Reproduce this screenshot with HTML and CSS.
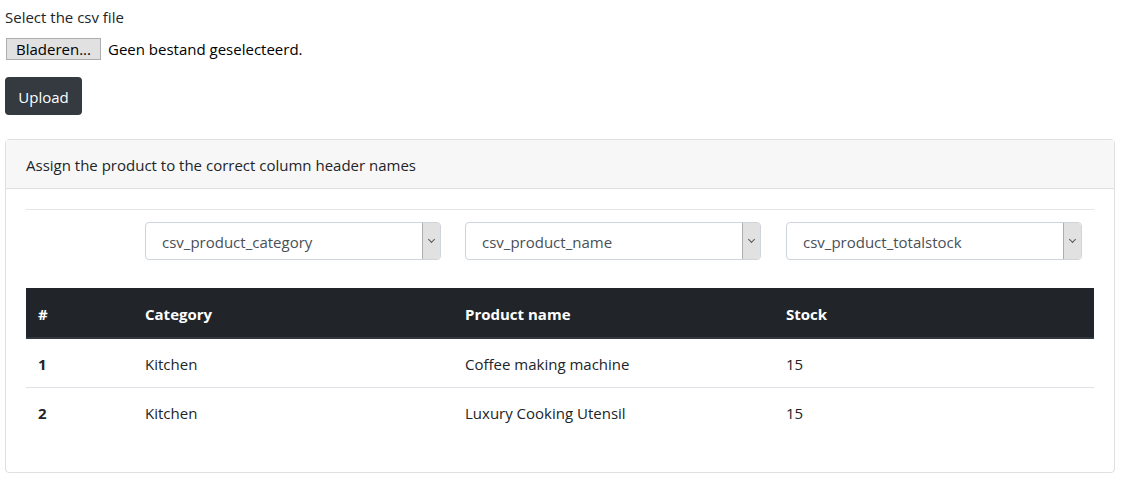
FILE: index.html
```html
<!DOCTYPE html>
<html lang="en">
<head>
    <meta charset="UTF-8" />
    <meta name="viewport" content="width=device-width, initial-scale=1.0" />
    <title>CSV import</title>
    <link rel="stylesheet" href="styles.css">
</head>

<body>
    <div class="container">
        <form class="upload-form">
            <label class="file-label">Select the csv file</label>
            <div class="file-input">
                <span class="file-button">Bladeren...</span>
                <span class="file-name">Geen bestand geselecteerd.</span>
            </div>
            <button type="button" class="btn-dark">Upload</button>
        </form>

        <div class="card">
            <div class="card-header">Assign the product to the correct column header names</div>
            <div class="card-body">
                <hr />
                <div class="mapping">
                    <div></div>
                    <div class="select-wrap">
                        <select><option>csv_product_category</option></select>
                        <span class="select-arrow"></span>
                    </div>
                    <div class="select-wrap">
                        <select><option>csv_product_name</option></select>
                        <span class="select-arrow"></span>
                    </div>
                    <div class="select-wrap">
                        <select><option>csv_product_totalstock</option></select>
                        <span class="select-arrow"></span>
                    </div>
                </div>

                <table class="table">
                    <thead>
                        <tr>
                            <th>#</th>
                            <th>Category</th>
                            <th>Product name</th>
                            <th>Stock</th>
                        </tr>
                    </thead>
                    <tbody>
                        <tr>
                            <th>1</th>
                            <td>Kitchen</td>
                            <td>Coffee making machine</td>
                            <td>15</td>
                        </tr>
                        <tr>
                            <th>2</th>
                            <td>Kitchen</td>
                            <td>Luxury Cooking Utensil</td>
                            <td>15</td>
                        </tr>
                    </tbody>
                </table>
            </div>
        </div>
    </div>
</body>
</html>
```

FILE: styles.css
```css
body {
    margin: 0;
    font-family: 'Open Sans', 'Noto Sans', sans-serif;
    font-size: 15px;
    color: #212529;
    background: #fff;
}

.container {
    width: 1110px;
    padding: 0 5px;
}

.upload-form {
    display: flex;
    flex-direction: column;
    align-items: flex-start;
}

.file-label {
    display: block;
    height: 24px;
    line-height: 24px;
    margin-top: 5px;
    font-size: 15px;
}

.file-input {
    display: flex;
    align-items: center;
    margin-top: 9px;
    height: 22px;
}

.file-button {
    box-sizing: border-box;
    width: 95px;
    height: 22px;
    margin-left: 1px;
    line-height: 20px;
    text-align: center;
    background: #e1e1e1;
    border: 1px solid #adadad;
    font-size: 15px;
    color: #000;
}

.file-name {
    margin-left: 7px;
    font-size: 15px;
    color: #000;
}

.btn-dark {
    margin-top: 17px;
    width: 77px;
    height: 38px;
    border: none;
    border-radius: 4px;
    background: #343a40;
    color: #fff;
    font-family: inherit;
    font-size: 15px;
    padding: 2px 0 0;
}

.card {
    margin-top: 24px;
    border: 1px solid #dfdfdf;
    border-radius: 4px;
}

.card-header {
    height: 46px;
    line-height: 46px;
    padding: 2px 20px 0;
    background: #f7f7f7;
    border-bottom: 1px solid #dfdfdf;
    font-size: 15px;
}

.card-body {
    padding: 20px;
}

hr {
    margin: 0 0 12px;
    border: 0;
    border-top: 1px solid #e5e5e5;
}

.mapping {
    display: grid;
    grid-template-columns: 119px 320px 321px 1fr;
    margin-bottom: 28px;
}

.select-wrap {
    position: relative;
    width: 296px;
    height: 38px;
}

.select-wrap select {
    box-sizing: border-box;
    width: 100%;
    height: 38px;
    padding: 2px 16px 0;
    border: 1px solid #ced4da;
    border-radius: 4px;
    background: #fff;
    font-family: inherit;
    font-size: 15px;
    color: #495057;
    appearance: none;
    -webkit-appearance: none;
}

/* native-looking dropdown button */
.select-arrow {
    position: absolute;
    top: 1px;
    right: 1px;
    bottom: 1px;
    width: 17px;
    background: #e1e1e1;
    border-left: 1px solid #adadad;
    border-radius: 0 3px 3px 0;
}

.select-arrow::after {
    content: "";
    position: absolute;
    left: 6px;
    top: 14px;
    width: 4px;
    height: 4px;
    border-right: 1px solid #555;
    border-bottom: 1px solid #555;
    transform: rotate(45deg);
}

.table {
    width: 100%;
    border-collapse: collapse;
    margin-bottom: 15px;
}

.table th,
.table td {
    box-sizing: border-box;
    text-align: left;
    padding: 2px 12px 0;
    height: 49px;
    vertical-align: middle;
    font-size: 15px;
}

.table thead th {
    background: #212529;
    color: #fff;
    height: 50px;
    border-bottom: 2px solid #32383e;
}

.table thead th:nth-child(1) { width: 107px; }
.table thead th:nth-child(2) { width: 320px; }
.table thead th:nth-child(3) { width: 321px; }

.table tbody tr + tr th,
.table tbody tr + tr td {
    border-top: 1px solid #dee2e6;
    height: 50px;
}
```
